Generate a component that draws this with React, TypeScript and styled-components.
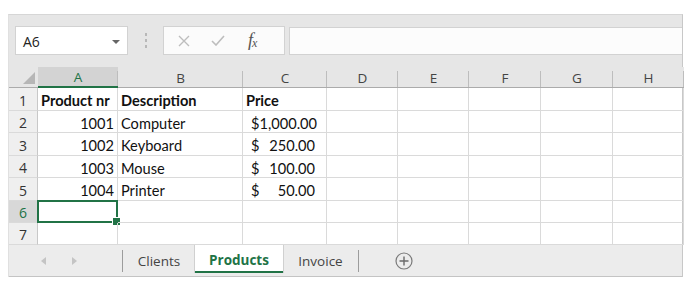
import { Fragment } from 'react';
import styled, { createGlobalStyle } from 'styled-components';

const GlobalStyle = createGlobalStyle`
	html, body {
		margin: 0;
		padding: 0;
		background: #fff;
	}
	* {
		box-sizing: border-box;
	}
`;

const GREEN = '#217346';
const GRID = '#dadada';

const columns = [ 'A', 'B', 'C', 'D', 'E', 'F', 'G', 'H' ];
const colWidths = [ 29, 80, 125, 84, 71, 71, 72, 72, 71 ];
const rowHeights = [ 23, 22, 23, 22, 23, 22, 22 ];

interface Product {
	nr?: number;
	description?: string;
	price?: string;
	header?: boolean;
}

const rows: Product[] = [
	{ header: true },
	{ nr: 1001, description: 'Computer', price: '1,000.00' },
	{ nr: 1002, description: 'Keyboard', price: '250.00' },
	{ nr: 1003, description: 'Mouse', price: '100.00' },
	{ nr: 1004, description: 'Printer', price: '50.00' },
	{},
	{},
];

const Frame = styled.div`
	margin: 14px 0 0 8px;
	width: 675px;
	border-top: 1px solid #d6d6d6;
	border-right: 1px solid #c8c8c8;
	border-left: 1px solid #e0e0e0;
	display: flex;
	flex-direction: column;
	font-family: Lato, 'Liberation Sans', sans-serif;
`;

const Toolbar = styled.div`
	height: 52px;
	background: #e6e6e6;
	display: flex;
	align-items: flex-start;
	padding: 11px 0 0 6px;
`;

const NameBox = styled.div`
	width: 113px;
	height: 29px;
	background: #fff;
	border: 1px solid #d2d2d2;
	display: flex;
	align-items: center;
	justify-content: space-between;
	padding: 1px 7px 0 7px;
	font-family: 'Open Sans', 'Liberation Sans', sans-serif;
	font-size: 14px;
	color: #222;
`;

const DropArrow = styled.span`
	width: 0;
	height: 0;
	border-left: 4px solid transparent;
	border-right: 4px solid transparent;
	border-top: 4px solid #666;
	margin-top: 1px;
`;

const Dots = styled.div`
	width: 35px;
	height: 29px;
	display: flex;
	flex-direction: column;
	align-items: center;
	justify-content: center;
	gap: 3px;

	span {
		width: 2px;
		height: 3px;
		background: #b8b8b8;
	}
`;

const FnBox = styled.div`
	width: 122px;
	height: 29px;
	background: #fbfbfb;
	border: 1px solid #d2d2d2;
	display: flex;
	align-items: center;
	padding-left: 14px;
	gap: 21px;
`;

const Fx = styled.span`
	font-family: 'Liberation Serif', serif;
	font-style: italic;
	font-size: 18px;
	color: #555;
	margin-left: 2px;
	letter-spacing: -1px;

	sub {
		font-size: 12px;
		vertical-align: -1px;
	}
`;

const FormulaInput = styled.div`
	flex: 1;
	height: 28px;
	margin-left: 4px;
	margin-top: 1px;
	background: #fcfcfc;
	border: 1px solid #d2d2d2;
	border-right: none;
`;

const Sheet = styled.div`
	display: grid;
	grid-template-columns: ${ colWidths.map( ( w ) => `${ w }px` ).join( ' ' ) };
	grid-template-rows: 21px ${ rowHeights.map( ( h ) => `${ h }px` ).join( ' ' ) };
	background: #fff;
`;

const ColHead = styled.div< { $selected?: boolean } >`
	position: relative;
	background: ${ ( p ) => ( p.$selected ? '#d3d3d3' : '#e6e6e6' ) };
	border-bottom: ${ ( p ) => ( p.$selected ? `2px solid ${ GREEN }` : '1px solid #ababab' ) };
	color: ${ ( p ) => ( p.$selected ? GREEN : '#444' ) };
	font-family: 'Open Sans', 'Liberation Sans', sans-serif;
	font-size: 13.5px;
	display: flex;
	align-items: center;
	justify-content: center;
	padding-top: 1px;

	&::after {
		content: '';
		position: absolute;
		right: 0;
		top: 4px;
		bottom: 0;
		width: 1px;
		background: #bdbdbd;
	}
`;

const Corner = styled.div`
	position: relative;
	background: #e6e6e6;
	border-bottom: 1px solid #ababab;

	&::after {
		content: '';
		position: absolute;
		right: 3px;
		bottom: 3px;
		width: 0;
		height: 0;
		border-left: 12px solid transparent;
		border-bottom: 12px solid #b6b6b6;
	}
`;

const RowHead = styled.div< { $selected?: boolean } >`
	background: ${ ( p ) => ( p.$selected ? '#d8d8d8' : '#efefef' ) };
	color: ${ ( p ) => ( p.$selected ? GREEN : '#333' ) };
	border-right: 1px solid #c8c8c8;
	border-bottom: 1px solid ${ GRID };
	font-family: 'Open Sans', 'Liberation Sans', sans-serif;
	font-size: 14px;
	display: flex;
	align-items: center;
	justify-content: center;
	padding-top: 2px;
`;

const Cell = styled.div< { $align?: 'left' | 'right'; $bold?: boolean } >`
	position: relative;
	border-right: 1px solid ${ GRID };
	border-bottom: 1px solid ${ GRID };
	display: flex;
	align-items: center;
	justify-content: ${ ( p ) => ( p.$align === 'right' ? 'flex-end' : 'flex-start' ) };
	padding: 3px 3px 0 3px;
	font-size: 14.6px;
	font-weight: ${ ( p ) => ( p.$bold ? 700 : 400 ) };
	color: #111;
	white-space: nowrap;
`;

const MoneyCell = styled( Cell )`
	justify-content: space-between;
	padding: 3px 11px 0 8px;
`;

const Selection = styled.div`
	position: absolute;
	left: -1px;
	top: -1px;
	right: -1px;
	bottom: -1px;
	border: 2px solid ${ GREEN };

	&::after {
		content: '';
		position: absolute;
		right: -5px;
		bottom: -5px;
		width: 7px;
		height: 7px;
		background: ${ GREEN };
		border: 1px solid #fff;
	}
`;

const TabBar = styled.div`
	height: 32px;
	background: #ececec;
	border-bottom: 1px solid #c4c4c4;
	display: flex;
	align-items: stretch;
	font-family: 'Open Sans', 'Liberation Sans', sans-serif;
	font-size: 13.5px;
	color: #444;
`;

const NavArea = styled.div`
	width: 113px;
	display: flex;
	align-items: center;
	padding-left: 32px;
	gap: 26px;
`;

const Divider = styled.div`
	width: 1px;
	background: #9c9c9c;
	margin: 5px 0 4px;
`;

const Tab = styled.div< { $width: number; $active?: boolean } >`
	width: ${ ( p ) => p.$width }px;
	display: flex;
	align-items: center;
	justify-content: center;
	padding-top: ${ ( p ) => ( p.$active ? '4px' : '1px' ) };
	background: ${ ( p ) => ( p.$active ? '#fff' : 'transparent' ) };
	color: ${ ( p ) => ( p.$active ? GREEN : '#444' ) };
	font-weight: ${ ( p ) => ( p.$active ? 700 : 400 ) };
	border-bottom: ${ ( p ) => ( p.$active ? `2px solid ${ GREEN }` : 'none' ) };
	margin-bottom: ${ ( p ) => ( p.$active ? '3px' : '0' ) };
	${ ( p ) => ( p.$active ? 'box-shadow: 1px 0 0 #d0d0d0, -1px 0 0 #d0d0d0;' : '' ) }
`;

const AddSheet = styled.div`
	display: flex;
	align-items: center;
	margin-left: 36px;
	padding-top: 1px;
`;

export default function App() {
	return (
		<>
			<GlobalStyle />
			<Frame>
				<Toolbar>
					<NameBox>
						A6
						<DropArrow />
					</NameBox>
					<Dots>
						<span />
						<span />
						<span />
					</Dots>
					<FnBox>
						<svg width="12" height="12" viewBox="0 0 12 12">
							<path d="M1 1 L11 11 M11 1 L1 11" stroke="#bdbdbd" strokeWidth="1.4" />
						</svg>
						<svg width="14" height="11" viewBox="0 0 14 11">
							<path d="M1 6 L5 10 L13 1" stroke="#bdbdbd" strokeWidth="1.6" fill="none" />
						</svg>
						<Fx>
							f<sub>x</sub>
						</Fx>
					</FnBox>
					<FormulaInput />
				</Toolbar>

				<Sheet>
					<Corner />
					{ columns.map( ( c ) => (
						<ColHead key={ c } $selected={ c === 'A' }>
							{ c }
						</ColHead>
					) ) }

					{ rows.map( ( row, i ) => (
						<Fragment key={ i }>
							<RowHead $selected={ i === 5 }>{ i + 1 }</RowHead>
							{ row.header ? (
								<>
									<Cell $bold>Product nr</Cell>
									<Cell $bold>Description</Cell>
									<Cell $bold>Price</Cell>
								</>
							) : (
								<>
									<Cell $align="right">
										{ row.nr }
										{ i === 5 && <Selection /> }
									</Cell>
									<Cell>{ row.description }</Cell>
									{ row.price ? (
										<MoneyCell>
											<span>$</span>
											<span>{ row.price }</span>
										</MoneyCell>
									) : (
										<Cell />
									) }
								</>
							) }
							{ columns.slice( 3 ).map( ( c ) => (
								<Cell key={ c } />
							) ) }
						</Fragment>
					) ) }
				</Sheet>

				<TabBar>
					<NavArea>
						<svg width="5" height="8" viewBox="0 0 5 8">
							<path d="M5 0 L0 4 L5 8 Z" fill="#c4c4c4" />
						</svg>
						<svg width="5" height="8" viewBox="0 0 5 8">
							<path d="M0 0 L5 4 L0 8 Z" fill="#c4c4c4" />
						</svg>
					</NavArea>
					<Divider />
					<Tab $width={ 72 }>Clients</Tab>
					<Tab $width={ 88 } $active>
						Products
					</Tab>
					<Tab $width={ 75 }>Invoice</Tab>
					<Divider />
					<AddSheet>
						<svg width="18" height="18" viewBox="0 0 18 18">
							<circle cx="9" cy="9" r="8" fill="none" stroke="#7a7a7a" strokeWidth="1.2" />
							<path d="M9 4.5 V13.5 M4.5 9 H13.5" stroke="#6a6a6a" strokeWidth="1.4" />
						</svg>
					</AddSheet>
				</TabBar>
			</Frame>
		</>
	);
}
